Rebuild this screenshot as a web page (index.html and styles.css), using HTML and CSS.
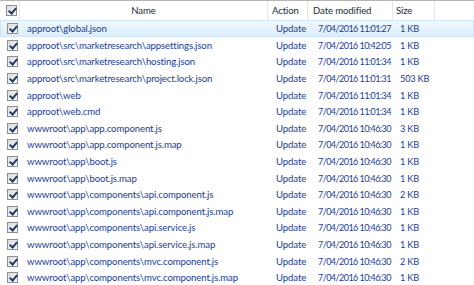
FILE: index.html
```html
<!DOCTYPE html>
<html>
<head>
<meta charset="utf-8">
<link rel="stylesheet" href="styles.css">
</head>
<body>
<div class="list">
  <div class="header">
    <div class="hc c-chk"><span class="chk"></span></div>
    <div class="hc c-name center">Name</div>
    <div class="hc c-act">Action</div>
    <div class="hc c-date">Date modified</div>
    <div class="hc c-size">Size</div>
    <div class="hc c-rest"></div>
  </div>
  <div class="row sel"><div class="c-chk"><span class="chk"></span></div><div class="c-name">approot\global.json</div><div class="c-act">Update</div><div class="c-date">7/04/2016 11:01:27</div><div class="c-size">1 KB</div></div>
  <div class="row"><div class="c-chk"><span class="chk"></span></div><div class="c-name">approot\src\marketresearch\appsettings.json</div><div class="c-act">Update</div><div class="c-date">7/04/2016 10:42:05</div><div class="c-size">1 KB</div></div>
  <div class="row"><div class="c-chk"><span class="chk"></span></div><div class="c-name">approot\src\marketresearch\hosting.json</div><div class="c-act">Update</div><div class="c-date">7/04/2016 11:01:34</div><div class="c-size">1 KB</div></div>
  <div class="row"><div class="c-chk"><span class="chk"></span></div><div class="c-name">approot\src\marketresearch\project.lock.json</div><div class="c-act">Update</div><div class="c-date">7/04/2016 11:01:31</div><div class="c-size">503 KB</div></div>
  <div class="row"><div class="c-chk"><span class="chk"></span></div><div class="c-name">approot\web</div><div class="c-act">Update</div><div class="c-date">7/04/2016 11:01:34</div><div class="c-size">1 KB</div></div>
  <div class="row"><div class="c-chk"><span class="chk"></span></div><div class="c-name">approot\web.cmd</div><div class="c-act">Update</div><div class="c-date">7/04/2016 11:01:34</div><div class="c-size">1 KB</div></div>
  <div class="row"><div class="c-chk"><span class="chk"></span></div><div class="c-name">wwwroot\app\app.component.js</div><div class="c-act">Update</div><div class="c-date">7/04/2016 10:46:30</div><div class="c-size">3 KB</div></div>
  <div class="row"><div class="c-chk"><span class="chk"></span></div><div class="c-name">wwwroot\app\app.component.js.map</div><div class="c-act">Update</div><div class="c-date">7/04/2016 10:46:30</div><div class="c-size">1 KB</div></div>
  <div class="row"><div class="c-chk"><span class="chk"></span></div><div class="c-name">wwwroot\app\boot.js</div><div class="c-act">Update</div><div class="c-date">7/04/2016 10:46:30</div><div class="c-size">1 KB</div></div>
  <div class="row"><div class="c-chk"><span class="chk"></span></div><div class="c-name">wwwroot\app\boot.js.map</div><div class="c-act">Update</div><div class="c-date">7/04/2016 10:46:30</div><div class="c-size">1 KB</div></div>
  <div class="row"><div class="c-chk"><span class="chk"></span></div><div class="c-name">wwwroot\app\components\api.component.js</div><div class="c-act">Update</div><div class="c-date">7/04/2016 10:46:30</div><div class="c-size">2 KB</div></div>
  <div class="row"><div class="c-chk"><span class="chk"></span></div><div class="c-name">wwwroot\app\components\api.component.js.map</div><div class="c-act">Update</div><div class="c-date">7/04/2016 10:46:30</div><div class="c-size">1 KB</div></div>
  <div class="row"><div class="c-chk"><span class="chk"></span></div><div class="c-name">wwwroot\app\components\api.service.js</div><div class="c-act">Update</div><div class="c-date">7/04/2016 10:46:30</div><div class="c-size">1 KB</div></div>
  <div class="row"><div class="c-chk"><span class="chk"></span></div><div class="c-name">wwwroot\app\components\api.service.js.map</div><div class="c-act">Update</div><div class="c-date">7/04/2016 10:46:30</div><div class="c-size">1 KB</div></div>
  <div class="row"><div class="c-chk"><span class="chk"></span></div><div class="c-name">wwwroot\app\components\mvc.component.js</div><div class="c-act">Update</div><div class="c-date">7/04/2016 10:46:30</div><div class="c-size">2 KB</div></div>
  <div class="row"><div class="c-chk"><span class="chk"></span></div><div class="c-name">wwwroot\app\components\mvc.component.js.map</div><div class="c-act">Update</div><div class="c-date">7/04/2016 10:46:30</div><div class="c-size">1 KB</div></div>
</div>
</body>
</html>
```
FILE: styles.css
```css
html, body {
  margin: 0;
  padding: 0;
  background: #ffffff;
}
body {
  font-family: "Lato", "Open Sans", "DejaVu Sans", sans-serif;
  font-size: 9.6px;
  letter-spacing: -0.12px;
  overflow: hidden;
}
.list {
  width: 474px;
  height: 285px;
  border-top: 1px solid #b4b4b4;
  box-sizing: border-box;
}
.header {
  display: flex;
  height: 19px;
  align-items: stretch;
  background: #ffffff;
  color: #1e2a3c;
}
.hc {
  display: flex;
  align-items: center;
  border-right: 1px solid #e3e6ea;
  box-sizing: border-box;
}
.hc.center { justify-content: center; }
.hc.c-rest { flex: 1; border-right: none; }
.row {
  display: flex;
  height: 16.6px;
  align-items: center;
  color: #1b3d93;
  border: 1px solid transparent;
  box-sizing: border-box;
  padding-top: 1px;
}
.row.sel {
  background: linear-gradient(#eef7fd, #dcedf9);
  border-color: #cfe6f6;
}
.c-chk {
  width: 20px;
  flex: none;
  box-sizing: border-box;
  padding-left: 6px;
  display: flex;
  align-items: center;
}
.c-name { width: 248px; flex: none; box-sizing: border-box; padding-left: 6px; white-space: nowrap; }
.c-act { width: 40px; flex: none; box-sizing: border-box; padding-left: 7px; }
.c-date { width: 85px; flex: none; box-sizing: border-box; padding-left: 9px; white-space: nowrap; }
.c-size { width: 42px; flex: none; box-sizing: border-box; padding-left: 6px; white-space: nowrap; }
.row .c-date { font-size: 9px; letter-spacing: -0.55px; }
.row .c-size { font-size: 9.2px; letter-spacing: -0.2px; }
.header .c-act { padding-left: 4px; }
.header .c-date { padding-left: 5px; }
.header .c-size { padding-left: 3px; }
.header .c-name { padding-left: 0; }
.chk {
  display: block;
  width: 11px;
  height: 11px;
  box-sizing: border-box;
  border: 1px solid #8f8f8f;
  background: linear-gradient(135deg, #dcdcdc, #fafafa);
  position: relative;
}
.chk::after {
  content: "";
  position: absolute;
  left: 3px;
  top: 0px;
  width: 2.5px;
  height: 6px;
  border-right: 2px solid #233a66;
  border-bottom: 2px solid #233a66;
  transform: rotate(40deg);
}
```
